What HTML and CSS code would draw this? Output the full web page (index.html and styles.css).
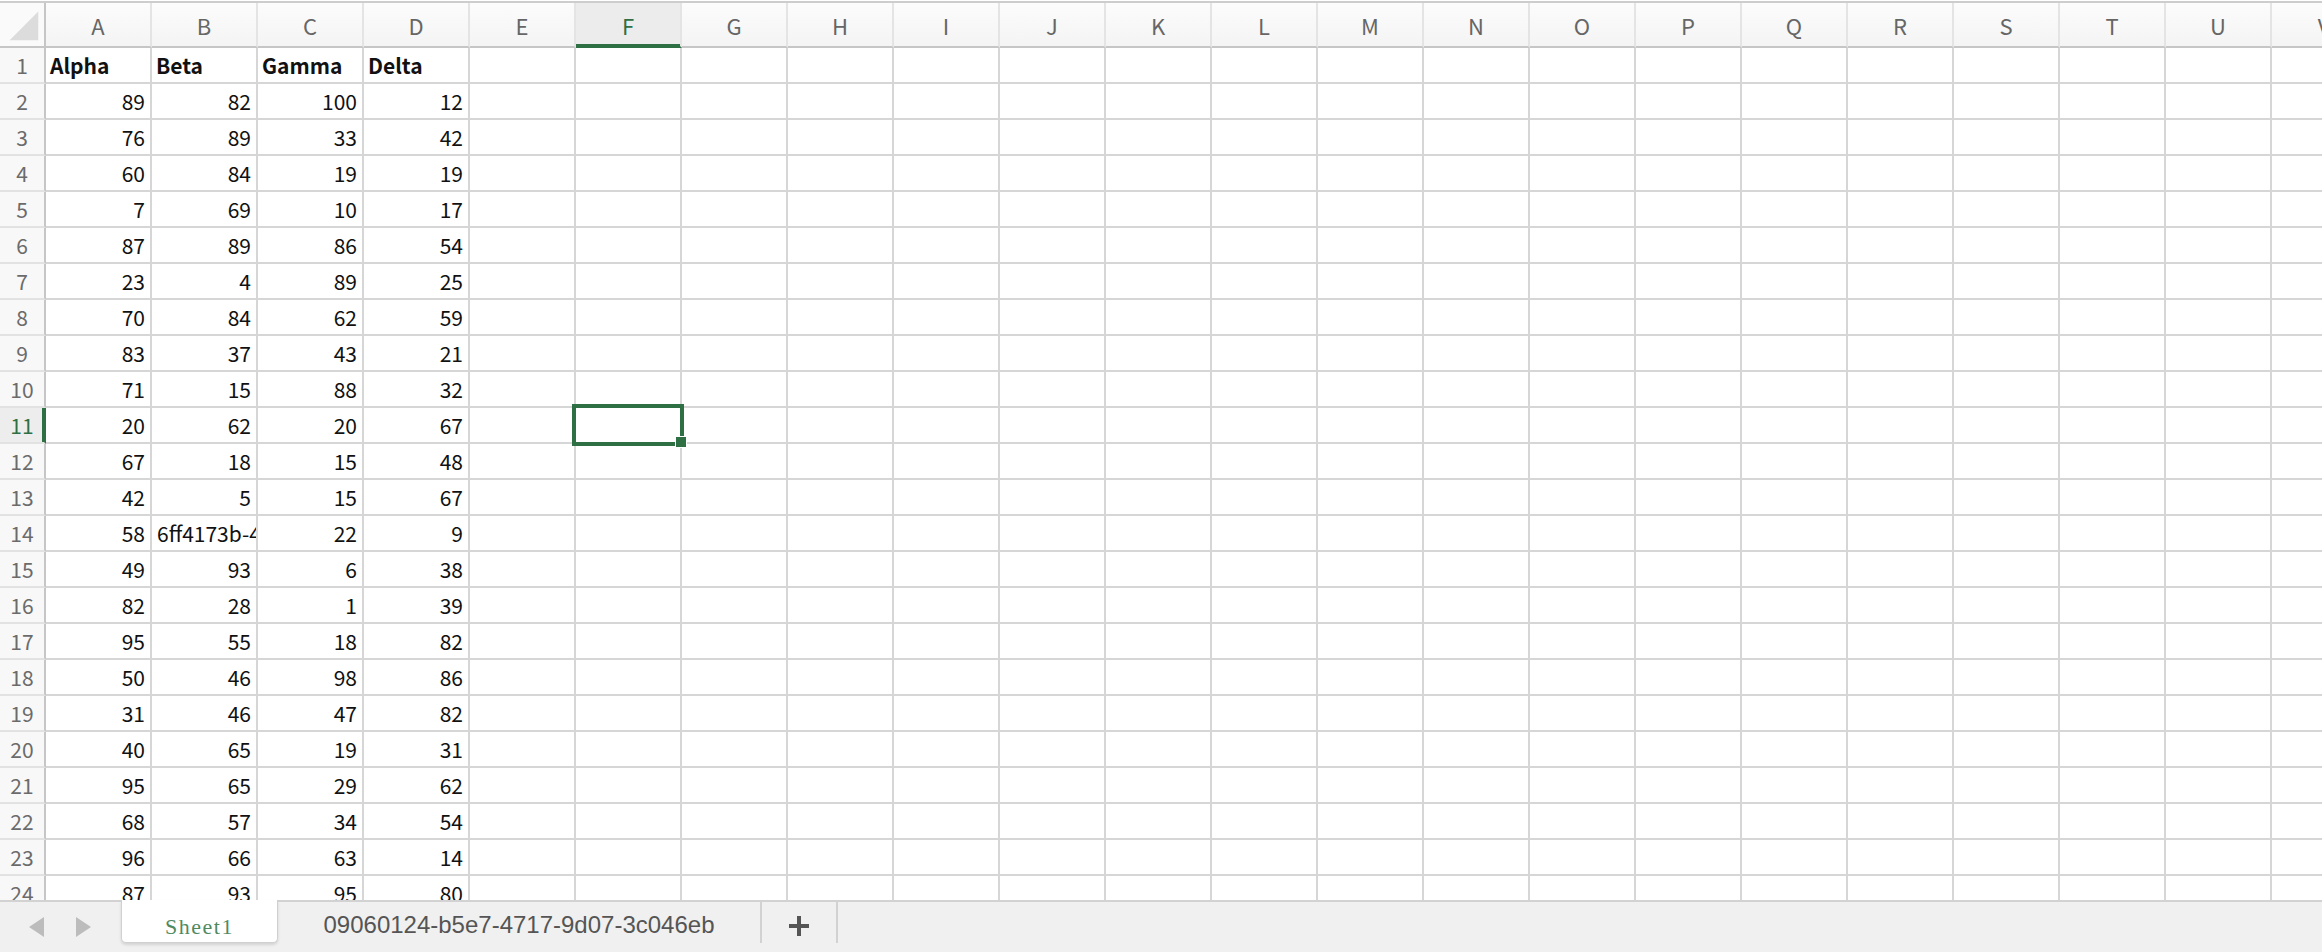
FILE: index.html
```html
<!DOCTYPE html>
<html lang="en">
<head>
    <meta charset="UTF-8">
    <meta name="viewport" content="width=device-width, initial-scale=1.0">
    <title>Sheet1</title>
    <link rel="stylesheet" href="styles.css">
</head>
<body>
    <div class="sheet">
        <div class="grid" id="grid"></div>
        <div class="selection"><span class="handle"></span></div>
    </div>

    <footer class="tabbar">
        <div class="nav">
            <svg class="arrow" width="15" height="20" viewBox="0 0 15 20"><polygon points="15,0 15,20 0,10"/></svg>
            <svg class="arrow" width="15" height="20" viewBox="0 0 15 20"><polygon points="0,0 0,20 15,10"/></svg>
        </div>
        <div class="tab active">Sheet1</div>
        <div class="tab">09060124-b5e7-4717-9d07-3c046eb</div>
        <div class="add-sheet">
            <svg width="20" height="20" viewBox="0 0 20 20"><rect x="8" y="0" width="4" height="20"/><rect x="0" y="8" width="20" height="4"/></svg>
        </div>
    </footer>

    <script>
        const columns = 'ABCDEFGHIJKLMNOPQRSTUV'.split('');
        const rows = [
            ['Alpha', 'Beta', 'Gamma', 'Delta'],
            [89, 82, 100, 12],
            [76, 89, 33, 42],
            [60, 84, 19, 19],
            [7, 69, 10, 17],
            [87, 89, 86, 54],
            [23, 4, 89, 25],
            [70, 84, 62, 59],
            [83, 37, 43, 21],
            [71, 15, 88, 32],
            [20, 62, 20, 67],
            [67, 18, 15, 48],
            [42, 5, 15, 67],
            [58, '6ff4173b-4a2c', 22, 9],
            [49, 93, 6, 38],
            [82, 28, 1, 39],
            [95, 55, 18, 82],
            [50, 46, 98, 86],
            [31, 46, 47, 82],
            [40, 65, 19, 31],
            [95, 65, 29, 62],
            [68, 57, 34, 54],
            [96, 66, 63, 14],
            [87, 93, 95, 80]
        ];
        const activeCol = 'F';
        const activeRow = 11;

        function makeCell(className, text) {
            const cell = document.createElement('div');
            cell.className = 'cell ' + className;
            if (text !== undefined) cell.textContent = text;
            return cell;
        }

        const grid = document.getElementById('grid');
        const corner = makeCell('corner');
        corner.innerHTML = '<svg width="46" height="45" viewBox="0 0 46 45"><polygon points="40,9 40,39 10,39"/></svg>';
        grid.appendChild(corner);

        columns.forEach(col => {
            grid.appendChild(makeCell('col-head' + (col === activeCol ? ' active' : ''), col));
        });

        rows.forEach((values, i) => {
            const rowNumber = i + 1;
            grid.appendChild(makeCell('row-head' + (rowNumber === activeRow ? ' active' : ''), rowNumber));
            columns.forEach((col, j) => {
                const value = values[j];
                if (value === undefined) {
                    grid.appendChild(makeCell('empty'));
                } else if (i === 0) {
                    grid.appendChild(makeCell('bold', value));
                } else if (typeof value === 'number') {
                    grid.appendChild(makeCell('num', value));
                } else {
                    grid.appendChild(makeCell('text', value));
                }
            });
        });
    </script>
</body>
</html>
```

FILE: styles.css
```css
* {
    box-sizing: border-box;
}
html, body {
    margin: 0;
    height: 100%;
}
body {
    padding-top: 1px;
    display: flex;
    flex-direction: column;
    background-color: #fff;
    font-family: "Noto Sans CJK JP", "Noto Sans", sans-serif;
    overflow: hidden;
}
.sheet {
    position: relative;
    flex: 1;
    overflow: hidden;
    border-top: 2px solid #cdcdcd;
}
.grid {
    display: grid;
    grid-template-columns: 46px repeat(22, 106px);
    grid-template-rows: 45px;
    grid-auto-rows: 36px;
}
.cell {
    display: flex;
    align-items: center;
    padding: 0 5px 0 4px;
    border-right: 2px solid #d6d6d6;
    border-bottom: 2px solid #d6d6d6;
    font-size: 21px;
    color: #111;
    white-space: nowrap;
    overflow: hidden;
}
.cell.num {
    justify-content: flex-end;
}
.cell.bold {
    font-weight: 700;
}
.cell.text {
    padding-left: 5px;
}
.corner {
    padding: 0;
    background-color: #fafafa;
    border-right-color: #c6c6c6;
    border-bottom-color: #c6c6c6;
}
.corner svg {
    display: block;
    fill: #dcdcdc;
}
.col-head {
    justify-content: center;
    padding: 0;
    background: linear-gradient(#fcfcfc, #f4f4f4);
    border-right-color: #e4e4e4;
    border-bottom-color: #c6c6c6;
    color: #666;
    font-size: 22px;
}
.col-head.active {
    background: #ececec;
    color: #2f6f44;
    border-bottom-color: #2f6f44;
    box-shadow: inset 0 -2px 0 #2f6f44;
}
.row-head {
    justify-content: center;
    padding: 0;
    background-color: #f8f8f8;
    border-right-color: #c6c6c6;
    border-bottom-color: #e2e2e2;
    color: #6b6b6b;
}
.row-head.active {
    background-color: #ededed;
    color: #2f6f44;
    border-right-color: #2f6f44;
    box-shadow: inset -2px 0 0 #2f6f44;
}
.selection {
    position: absolute;
    left: 572px;
    top: 401px;
    width: 112px;
    height: 42px;
    border: 4px solid #2f6f44;
}
.handle {
    position: absolute;
    left: 99px;
    top: 28px;
    width: 12px;
    height: 12px;
    background-color: #2f6f44;
    border: 1px solid #fff;
}
.tabbar {
    display: flex;
    align-items: flex-start;
    height: 52px;
    flex-shrink: 0;
    background-color: #f0f0f0;
    border-top: 2px solid #d2d2d2;
}
.nav {
    display: flex;
    align-items: center;
    gap: 32px;
    width: 121px;
    height: 50px;
    padding-left: 29px;
}
.arrow {
    fill: #bcbcbc;
}
.tab {
    display: flex;
    justify-content: center;
    align-items: center;
    width: 484px;
    height: 41px;
    padding-top: 5px;
    border-right: 2px solid #d2d2d2;
    font-family: "Liberation Sans", Arial, sans-serif;
    font-size: 24px;
    color: #555;
}
.tab.active {
    width: 157px;
    height: 43px;
    margin-top: -2px;
    padding-top: 12px;
    background-color: #fff;
    border: 1px solid #d0d0d0;
    border-top: none;
    border-radius: 0 0 5px 5px;
    box-shadow: 0 2px 3px rgba(0, 0, 0, 0.12);
    font-family: "Liberation Serif", "DejaVu Serif", serif;
    font-size: 22px;
    letter-spacing: 1.5px;
    color: #4f8a5f;
}
.add-sheet {
    display: flex;
    justify-content: center;
    align-items: center;
    width: 76px;
    height: 41px;
    padding-top: 6px;
    border-right: 2px solid #d2d2d2;
}
.add-sheet svg {
    fill: #555;
}
```
